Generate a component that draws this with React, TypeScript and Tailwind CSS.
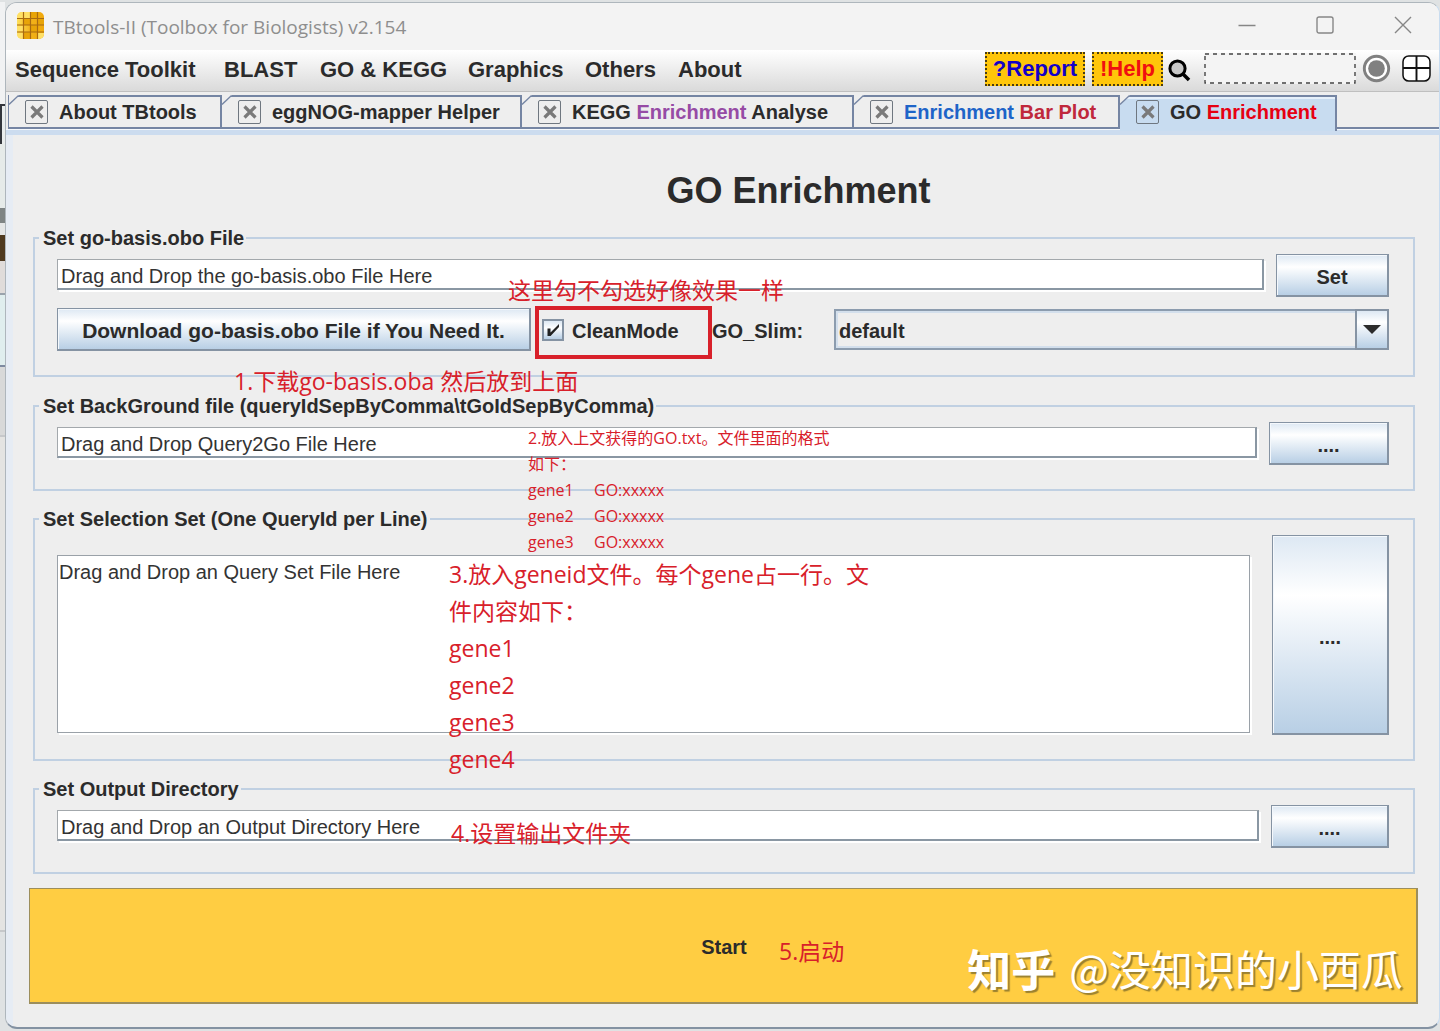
import React from "react";

type Part = { text: string; color?: string };

const tabs: { parts: Part[]; width: string; active?: boolean }[] = [
  { parts: [{ text: "About TBtools" }], width: "w-[213px]" },
  { parts: [{ text: "eggNOG-mapper Helper" }], width: "w-[300px]" },
  {
    parts: [{ text: "KEGG " }, { text: "Enrichment", color: "text-[#964ba5]" }, { text: " Analyse" }],
    width: "w-[332px]",
  },
  {
    parts: [
      { text: "Enrichment ", color: "text-[#1e64c8]" },
      { text: "Bar Plot", color: "text-[#c0283c]" },
    ],
    width: "w-[266px]",
  },
  {
    parts: [{ text: "GO " }, { text: "Enrichment", color: "text-[#e60012]" }],
    width: "w-[217px]",
    active: true,
  },
];

const menus = [
  { name: "Sequence Toolkit", width: "w-[209px]" },
  { name: "BLAST", width: "w-[96px]" },
  { name: "GO & KEGG", width: "w-[148px]" },
  { name: "Graphics", width: "w-[117px]" },
  { name: "Others", width: "w-[93px]" },
  { name: "About", width: "w-[80px]" },
];

const metal =
  "shrink-0 border border-r-2 border-b-2 border-[#8593a3] bg-linear-to-b from-[#dde8f3] via-white via-30% to-[#b8cfe5] font-bold text-[#2b2b2b] shadow-[inset_1px_1px_0_#f4f8fc]";

const field =
  "mb-0.5 h-[31px] min-w-0 flex-1 border border-r-2 border-b-2 border-t-[#a3a8ac] border-l-[#a3a8ac] border-r-[#8a97a3] border-b-[#8a97a3] bg-white pt-[5px] pl-[3px] text-xl leading-6 text-[#333] shadow-[2px_2px_0_#fff] outline-none";

const note = "pointer-events-none absolute whitespace-pre text-[#d8202a] font-['Open_Sans','Noto_Sans_CJK_SC',sans-serif]";
const noteLarge = "text-[23px] leading-[37px]";

function AppLogo() {
  return (
    <svg viewBox="0 0 27 27" className="mb-[3px] h-[27px] w-[27px]" aria-hidden="true">
      <defs>
        <clipPath id="logo-shape">
          <rect width="27" height="27" rx="5" />
        </clipPath>
        <linearGradient id="logo-fill" x1="0" x2="1">
          <stop offset="0" stopColor="#ffe05a" />
          <stop offset="0.5" stopColor="#f2b21c" />
          <stop offset="1" stopColor="#f0a80a" />
        </linearGradient>
      </defs>
      <g clipPath="url(#logo-shape)">
        <rect width="27" height="27" fill="url(#logo-fill)" />
        <path d="M14 0h6v6h-6zM7 6h6v7H7zM14 13h6v7h-6zM21 6h6v7h-6zM7 20h6v7H7z" fill="#e8a408" />
        <path d="M0 0h6v6H0zM7 0h6v6H7zM0 14h6v5H0zM0 21h6v6H0zM21 21h6v6h-6z" fill="#ffe066" />
        <path d="M6.5 0v27M13.5 0v27M20.5 0v27M0 6.5h27M0 13h27M0 20h27" stroke="#a86a12" strokeWidth="1.2" />
      </g>
    </svg>
  );
}

function Tab({ parts, width, active }: { parts: Part[]; width: string; active?: boolean }) {
  return (
    <div
      role="tab"
      aria-selected={!!active}
      className={`relative flex shrink-0 items-start border-t-2 border-r-2 border-[#7585a3] pt-[3px] pl-4 ${width} ${
        active
          ? "h-[36px] bg-[#c8dcf0] shadow-[inset_0_2px_0_#e6f0fa]"
          : "h-[34px] border-b-2 bg-[#eeeeee]"
      }`}
    >
      <svg viewBox="0 0 10 10" className="absolute -top-0.5 left-0 h-[10px] w-[10px]" aria-hidden="true">
        <path d="M0 0h10L0 10z" fill="#eeeeee" />
        <path d="M0 9.5L9.5 0.5" stroke="#7585a3" strokeWidth="1.3" />
      </svg>
      <button
        type="button"
        aria-label="Close tab"
        className="flex h-[24px] w-[23px] shrink-0 items-center justify-center rounded-xs border border-[#6f7780]"
      >
        <svg viewBox="0 0 14 14" className="h-[14px] w-[14px]" aria-hidden="true">
          <path d="M1.5 1.5L12.5 12.5M12.5 1.5L1.5 12.5" stroke="#7a7a7a" strokeWidth="3.2" />
        </svg>
      </button>
      <span className="ml-[11px] text-xl leading-6 font-bold whitespace-pre">
        {parts.map((p) => (
          <span key={p.text} className={p.color ?? "text-[#2b2b2b]"}>
            {p.text}
          </span>
        ))}
      </span>
    </div>
  );
}

function Group({
  title,
  className = "",
  bodyClass = "",
  notes,
  children,
}: {
  title: string;
  className?: string;
  bodyClass?: string;
  notes?: React.ReactNode;
  children: React.ReactNode;
}) {
  return (
    <div className={`relative mr-[3px] ml-1 flex flex-col ${className}`}>
      <fieldset className="min-w-0 flex-1 border-2 border-[#c0d0e2] px-1">
        <legend className="pr-0.5 pl-1 text-xl leading-6 font-bold">{title}</legend>
        <div className={`pt-1 pr-5 pb-6 pl-[18px] ${bodyClass}`}>{children}</div>
      </fieldset>
      {notes}
    </div>
  );
}

export default function App() {
  return (
    <div className="flex min-h-screen overflow-hidden bg-[#dfe2e3] pt-0.5 pb-0.5 font-['Liberation_Sans',Arial,sans-serif] text-[#2b2b2b]">
      <div className="flex w-[5px] shrink-0 flex-col" aria-hidden="true">
        <div className="h-[102px] bg-[#f1f2f3]" />
        <div className="h-10 border-t-2 border-l-2 border-[#33363c] bg-[#e9eded]" />
        <div className="h-16 bg-[#e6ebe9]" />
        <div className="h-[15px] bg-[#7e8484]" />
        <div className="h-3 bg-[#e4e6e6]" />
        <div className="h-[26px] bg-[#4e3a20]" />
        <div className="h-8 bg-[#e0dcda]" />
        <div className="h-[72px] border-t-2 border-[#9aa3ac] bg-[#e0eeee]" />
        <div className="h-[70px] border-t-2 border-[#7e8aa0] bg-[#d8d9d9]" />
        <div className="h-[497px] border-t-2 border-b-2 border-[#c6c8ca] bg-[#e4e4e2]" />
      </div>

      <div className="flex min-w-0 flex-1 flex-col overflow-hidden rounded-xl border border-b-2 border-[#aeb6bc] border-r-[#c8dcf0] border-b-[#8492a2] bg-[#eeeeee]">
        <header className="flex h-[47px] shrink-0 items-center bg-[#f3f3f3] pl-[11px]">
          <AppLogo />
          <span className="ml-[9px] flex-1 font-['Open_Sans',sans-serif] text-[19px] leading-6 text-[#8e8e8e]">
            TBtools-II (Toolbox for Biologists) v2.154
          </span>
          <div className="flex items-center gap-[60px] pr-[27px] pb-[3px] text-[#868686]">
            <button type="button" aria-label="Minimize">
              <svg viewBox="0 0 18 18" className="h-[18px] w-[18px]">
                <path d="M0.5 9.5h17" stroke="currentColor" strokeWidth="1.3" />
              </svg>
            </button>
            <button type="button" aria-label="Maximize">
              <svg viewBox="0 0 18 18" className="h-[18px] w-[18px]">
                <rect x="1" y="1" width="16" height="16" rx="2" fill="none" stroke="currentColor" strokeWidth="1.4" />
              </svg>
            </button>
            <button type="button" aria-label="Close">
              <svg viewBox="0 0 18 18" className="h-[18px] w-[18px]">
                <path d="M1 1l16 16M17 1L1 17" stroke="currentColor" strokeWidth="1.4" />
              </svg>
            </button>
          </div>
        </header>

        <nav className="flex h-[42px] shrink-0 items-center border-b border-[#bfbfbf] bg-linear-to-b from-white to-[#dadada] pr-2 pb-1 pl-[9px]">
          <div className="flex flex-1 pt-0.5">
            {menus.map((m) => (
              <button
                key={m.name}
                type="button"
                className={`shrink-0 text-left text-[22px] leading-7 font-bold whitespace-nowrap ${m.width}`}
              >
                {m.name}
              </button>
            ))}
          </div>
          <button
            type="button"
            className="h-[34px] w-[100px] border-2 border-dotted border-[#4a3c10] bg-[#ffc60a] text-[22px] leading-7 font-bold text-[#1400c8]"
          >
            ?Report
          </button>
          <button
            type="button"
            className="ml-[7px] h-[34px] w-[71px] border-2 border-dotted border-[#4a3c10] bg-[#ffc60a] text-[22px] leading-7 font-bold text-[#f01010]"
          >
            !Help
          </button>
          <label htmlFor="search" aria-label="Search" className="mt-1 ml-[5px]">
            <svg viewBox="0 0 23 23" className="h-[23px] w-[23px]" aria-hidden="true">
              <circle cx="9.5" cy="9.5" r="7.6" fill="#c8c8c8" stroke="#000" strokeWidth="3" />
              <path d="M14.5 14.5l6.5 6.5" stroke="#000" strokeWidth="3.6" />
            </svg>
          </label>
          <div className="relative ml-[13px] flex">
            <input id="search" className="h-[31px] w-[152px] bg-[#f4f4f4] px-1 outline-none" />
            <svg viewBox="0 0 152 31" className="pointer-events-none absolute inset-0 h-[31px] w-[152px]" aria-hidden="true">
              <rect x="1" y="1" width="150" height="29" fill="none" stroke="#444" strokeWidth="1.4" strokeDasharray="4 4" />
            </svg>
          </div>
          <button type="button" aria-label="Record" className="ml-[6px]">
            <svg viewBox="0 0 30 30" className="h-[29px] w-[29px]">
              <circle cx="15" cy="15" r="12.6" fill="#fff" stroke="#808080" strokeWidth="3" />
              <circle cx="15" cy="15" r="8.6" fill="#808080" />
            </svg>
          </button>
          <button type="button" aria-label="Grid" className="ml-[11px]">
            <svg viewBox="0 0 30 28" className="h-[27px] w-[29px]">
              <rect x="1" y="1" width="28" height="26" rx="6" fill="#fff" stroke="#111" strokeWidth="1.6" />
              <path d="M15 1v26M1 13.5h28" stroke="#111" strokeWidth="2" />
            </svg>
          </button>
        </nav>

        <div className="flex shrink-0 flex-col pt-[3px]">
          <div role="tablist" className="ml-0.5 flex h-[34px] items-start border-l border-[#7585a3]">
            {tabs.map((t, i) => (
              <Tab key={i} {...t} />
            ))}
            <div className="h-[34px] flex-1 border-b-2 border-[#7585a3]" />
          </div>
          <div className="h-[6px] border-t border-[#f4f8fc] bg-[#ccdcef]" />
        </div>

        <main className="flex flex-1 flex-col border-l-[7px] border-[#e6ecf4] pt-[34px] pr-[21px] pb-[23px] pl-4">
          <h1 className="mb-[13px] pl-[150px] text-center text-4xl leading-[44px] font-bold">GO Enrichment</h1>

          <Group
            title="Set go-basis.obo File"
            bodyClass="flex flex-col gap-[11px]"
            notes={
              <>
                <p className={`${note} ${noteLarge} top-[46px] left-[475px]`}>这里勾不勾选好像效果一样</p>
                <div className="pointer-events-none absolute top-[80px] left-[502px] h-[53px] w-[177px] border-4 border-[#d8202a]" />
                <p className={`${note} ${noteLarge} top-[137px] left-[201px]`}>1.下载go-basis.oba 然后放到上面</p>
              </>
            }
          >
            <div className="flex items-center gap-3">
              <input aria-label="go-basis.obo file" defaultValue="Drag and Drop the go-basis.obo File Here" className={field} />
              <button type="button" className={`${metal} h-[43px] w-[113px] pt-1 text-xl`}>
                Set
              </button>
            </div>
            <div className="flex items-center">
              <button type="button" className={`${metal} h-[43px] w-[474px] pt-1 text-[21px]`}>
                Download go-basis.obo File if You Need It.
              </button>
              <label className="ml-[11px] flex w-[170px] items-center gap-2 text-xl font-bold">
                <span className="relative flex">
                  <input
                    type="checkbox"
                    defaultChecked
                    className="h-[22px] w-[22px] appearance-none border-2 border-[#8593a3] bg-linear-to-b from-[#dde8f3] via-white via-40% to-[#b8cfe5]"
                  />
                  <svg viewBox="0 0 22 22" className="pointer-events-none absolute inset-0 h-[22px] w-[22px]" aria-hidden="true">
                    <path d="M5.5 9.5h3v4L17 5v3L8.6 17H5.5z" fill="#222" />
                  </svg>
                </span>
                <span className="pt-0.5 leading-6">CleanMode</span>
              </label>
              <label htmlFor="slim" className="w-[122px] pt-0.5 text-xl leading-6 font-bold">
                GO_Slim:
              </label>
              <div className="relative flex min-w-0 flex-1">
                <select
                  id="slim"
                  className="h-[41px] w-full appearance-none border-2 border-[#8c9cae] bg-[#eeeeee] pt-0.5 pl-[3px] text-xl font-bold shadow-[inset_0_0_0_2px_#d3dfec] outline-none"
                >
                  <option>default</option>
                </select>
                <span className="pointer-events-none absolute top-0 right-0 flex h-[41px] w-[34px] items-center justify-center border-2 border-[#8593a3] bg-linear-to-b from-[#dde8f3] via-white via-30% to-[#b8cfe5]">
                  <svg viewBox="0 0 18 9" className="h-[9px] w-[18px]" aria-hidden="true">
                    <path d="M0 0h18L9 9z" fill="#2b2b2b" />
                  </svg>
                </span>
              </div>
            </div>
          </Group>

          <Group
            title="Set BackGround file (queryIdSepByComma\tGoIdSepByComma)"
            className="mt-[17px]"
            notes={
              <div className={`${note} top-[31px] left-[495px] z-10 text-base leading-[26px]`}>
                <p>2.放入上文获得的GO.txt。文件里面的格式</p>
                <p>如下：</p>
                {["gene1", "gene2", "gene3"].map((g) => (
                  <p key={g} className="flex">
                    <span className="w-[66px]">{g}</span>
                    <span>GO:xxxxx</span>
                  </p>
                ))}
              </div>
            }
          >
            <div className="flex items-center gap-3">
              <input aria-label="Background file" defaultValue="Drag and Drop Query2Go File Here" className={field} />
              <button type="button" className={`${metal} h-[43px] w-[120px] pt-1 text-xl`}>
                ....
              </button>
            </div>
          </Group>

          <Group
            title="Set Selection Set (One QueryId per Line)"
            className="mt-4 flex-1"
            notes={
              <div className={`${note} ${noteLarge} top-[49px] left-[416px]`}>
                <p>3.放入geneid文件。每个gene占一行。文</p>
                <p>件内容如下：</p>
                <p>gene1</p>
                <p>gene2</p>
                <p>gene3</p>
                <p>gene4</p>
              </div>
            }
          >
            <div className="flex gap-[22px]">
              <textarea
                aria-label="Selection set"
                defaultValue="Drag and Drop an Query Set File Here"
                className="mt-5 h-[178px] min-w-0 flex-1 resize-none border border-[#9aa1a8] bg-white pt-1 pl-px text-xl leading-6 text-[#333] shadow-[2px_2px_0_#fff] outline-none"
              />
              <button type="button" className={`${metal} h-[200px] w-[117px] pt-1 text-xl`}>
                ....
              </button>
            </div>
          </Group>

          <Group
            title="Set Output Directory"
            className="mt-4"
            notes={<p className={`${note} ${noteLarge} top-[38px] left-[418px]`}>4.设置输出文件夹</p>}
          >
            <div className="flex items-center gap-3">
              <input aria-label="Output directory" defaultValue="Drag and Drop an Output Directory Here" className={field} />
              <button type="button" className={`${metal} h-[43px] w-[118px] pt-1 text-xl`}>
                ....
              </button>
            </div>
          </Group>

          <div className="relative mt-[14px] flex">
            <button
              type="button"
              className="h-[116px] flex-1 border border-r-2 border-b-2 border-[#9c8e5c] bg-[#ffcd42] pt-0.5 pl-0.5 text-xl leading-6 font-bold"
            >
              Start
            </button>
            <p className={`${note} ${noteLarge} top-[45px] left-[750px]`}>5.启动</p>
            <p className="pointer-events-none absolute right-[15px] bottom-[6px] flex items-center gap-[14px] font-['Noto_Sans_CJK_SC',sans-serif] leading-[60px] whitespace-nowrap text-white [text-shadow:2px_2px_1px_#9a8030]">
              <span className="text-[44px] font-bold">知乎</span>
              <span className="text-[42px]">@没知识的小西瓜</span>
            </p>
          </div>
        </main>
      </div>
    </div>
  );
}
